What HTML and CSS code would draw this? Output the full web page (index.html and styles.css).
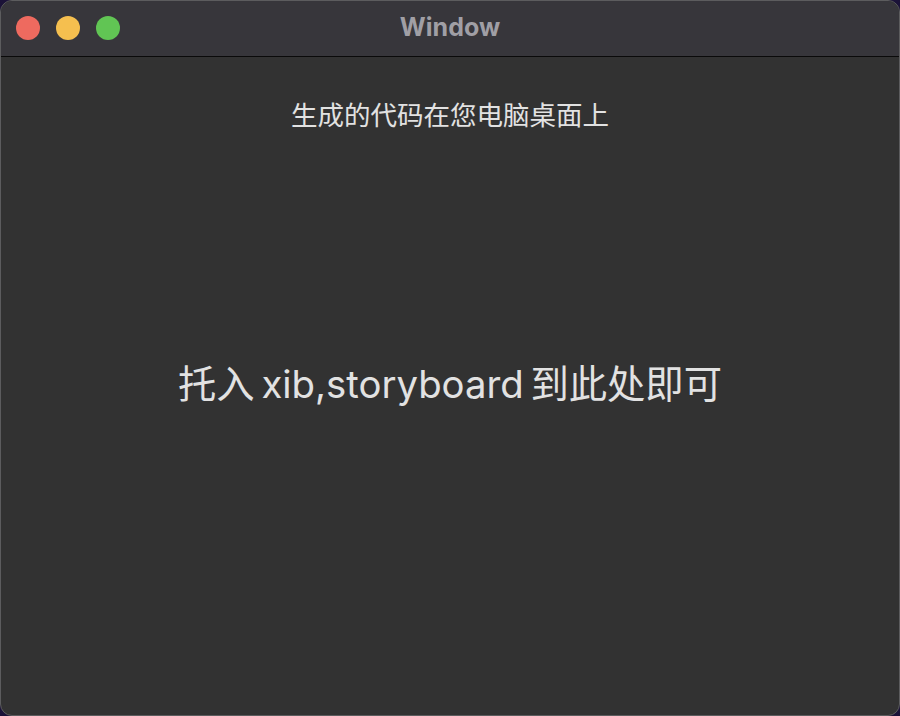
FILE: index.html
```html
<!DOCTYPE html>
<html lang="zh-CN">
<head>
  <meta charset="UTF-8" />
  <title>Window</title>
  <link rel="stylesheet" href="styles.css">
</head>
<body>

<div class="window">
  <div class="titlebar">
    <div class="lights">
      <span class="light red"></span>
      <span class="light yellow"></span>
      <span class="light green"></span>
    </div>
    <div class="title">Window</div>
  </div>

  <div class="content">
    <p class="hint">生成的代码在您电脑桌面上</p>
    <div class="drop">托入 xib,storyboard 到此处即可</div>
  </div>
</div>

</body>
</html>
```

FILE: styles.css
```css
* {
  margin: 0;
  padding: 0;
  box-sizing: border-box;
}

body {
  width: 900px;
  height: 716px;
  background: #1b1238;
  font-family: "Inter", "Noto Sans CJK SC", sans-serif;
}

.window {
  width: 900px;
  height: 716px;
  display: flex;
  flex-direction: column;
  background-color: #323232;
  border: 1px solid #5c5c5e;
  border-radius: 12px;
  overflow: hidden;
}

.titlebar {
  position: relative;
  height: 56px;
  flex-shrink: 0;
  display: flex;
  align-items: center;
  justify-content: center;
  padding-bottom: 3px;
  background-color: #37363b;
  border-bottom: 1px solid #0a0a0a;
}

.lights {
  position: absolute;
  left: 15px;
  top: 15px;
  display: flex;
  gap: 16px;
}

.light {
  width: 24px;
  height: 24px;
  border-radius: 50%;
}

.red { background-color: #ee6a5f; }
.yellow { background-color: #f5bf4f; }
.green { background-color: #61c554; }

.title {
  font-size: 25px;
  font-weight: 700;
  color: #a09fa5;
}

.content {
  flex: 1;
  display: flex;
  flex-direction: column;
  align-items: center;
}

.hint {
  margin-top: 42px;
  font-size: 26.5px;
  line-height: 32px;
  color: #e2e2e2;
}

.drop {
  margin-top: 230px;
  font-size: 38.3px;
  line-height: 46px;
  color: #e2e2e2;
  word-spacing: -4px;
}
```
